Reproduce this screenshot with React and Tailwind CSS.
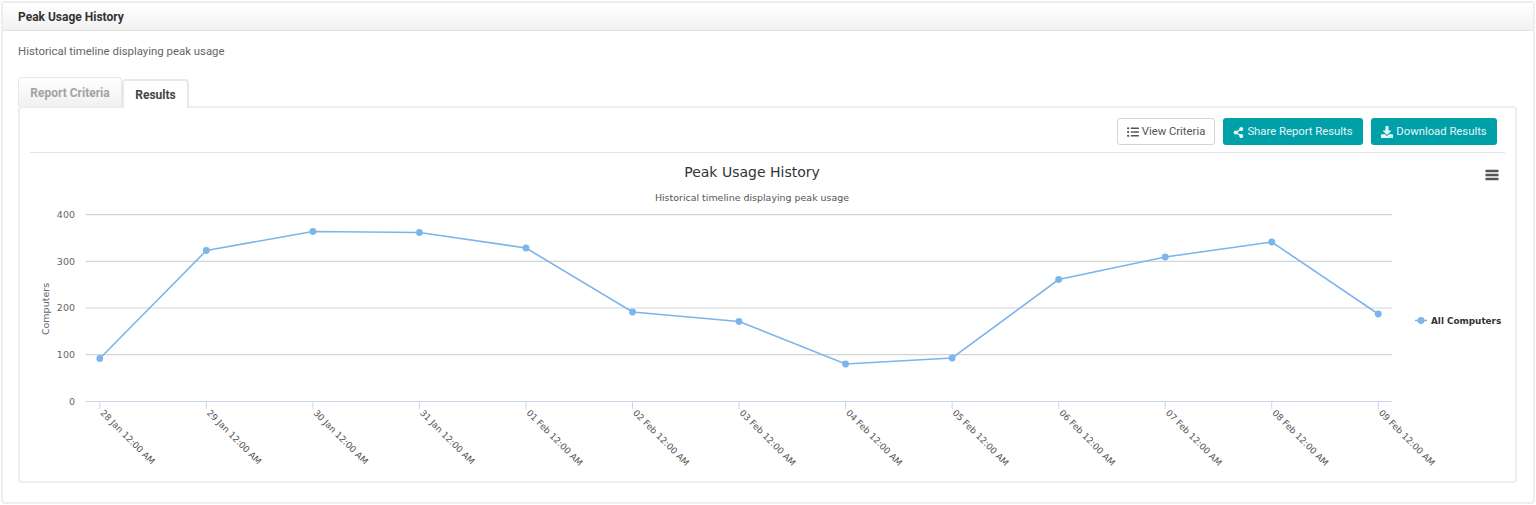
import { FaListUl, FaShareAlt, FaDownload } from 'react-icons/fa';

const pts = [358.5, 250.5, 231.5, 232.5, 248, 312, 321.5, 364, 358, 279.5, 257, 242, 314];
const dates = ['28 Jan', '29 Jan', '30 Jan', '31 Jan', '01 Feb', '02 Feb', '03 Feb', '04 Feb', '05 Feb', '06 Feb', '07 Feb', '08 Feb', '09 Feb'];
const xAt = i => 99.8 + i * 106.54;
const chartFont = '"DejaVu Sans", sans-serif';

function Chart() {
  return (
    <svg viewBox="30 153 1475 327" className="block w-full h-[327px]" style={{ fontFamily: chartFont }}>
      <text x="752" y="177" textAnchor="middle" fontSize="14" fill="#333">Peak Usage History</text>
      <text x="752" y="200.5" textAnchor="middle" fontSize="9.45" fill="#555">Historical timeline displaying peak usage</text>
      <path d="M1485.5 171h13M1485.5 175h13M1485.5 179h13" stroke="#555" strokeWidth="2.4" />

      {[400, 300, 200, 100].map(v => {
        const y = 401.3 - v * 0.4665;
        return <line key={v} x1="86" x2="1392" y1={y} y2={y} stroke="#d4d4d4" strokeWidth="1.2" />;
      })}
      <line x1="86" x2="1392" y1="401.5" y2="401.5" stroke="#ccd6eb" strokeWidth="1.2" />
      {[400, 300, 200, 100, 0].map(v => (
        <text key={v} x="75" y={404.5 - v * 0.4665} textAnchor="end" fontSize="9.5" fill="#666">{v}</text>
      ))}
      <text transform="translate(49 309) rotate(-90)" textAnchor="middle" fontSize="9.5" fill="#666">Computers</text>

      {dates.map((d, i) => (
        <g key={d}>
          <line x1={xAt(i)} x2={xAt(i)} y1="402" y2="409" stroke="#ccd6eb" />
          <text transform={`translate(${xAt(i)} 413.5) rotate(45)`} fontSize="8.9" fill="#555">{d} 12:00 AM</text>
        </g>
      ))}

      <polyline points={pts.map((y, i) => `${xAt(i)},${y}`).join(' ')} fill="none" stroke="#7cb5ec" strokeWidth="1.6" />
      {pts.map((y, i) => <circle key={i} cx={xAt(i)} cy={y} r="3.4" fill="#7cb5ec" />)}

      <line x1="1415" x2="1427" y1="320.5" y2="320.5" stroke="#7cb5ec" strokeWidth="1.6" />
      <circle cx="1421" cy="320.5" r="3.4" fill="#7cb5ec" />
      <text x="1431" y="324" fontSize="8.85" fontWeight="700" fill="#333">All Computers</text>
    </svg>
  );
}

export default function App() {
  return (
    <div className="h-[505px] bg-white pt-px px-px font-['Roboto',sans-serif] text-[#555]">
      <div className="h-[503px] border-2 border-[#eeeeee] rounded-sm">
        <div className="h-[28px] flex items-center pl-[15px] border-b border-[#e2e2e2] bg-gradient-to-b from-white to-[#f2f2f2]">
          <h2 className="text-[12px] font-bold text-[#333]">Peak Usage History</h2>
        </div>

        <div className="pl-[15px]">
          <p className="mt-[11px] text-[11.4px] leading-[18px] text-[#666]">Historical timeline displaying peak usage</p>

          <div className="mt-[17px] flex items-end h-[29px] relative z-10">
            <div className="h-[29px] w-[104px] flex items-center justify-center border border-b-0 border-[#e8e8e8] rounded-t-sm bg-gradient-to-b from-white to-[#f1f1f1] text-[12px] font-bold text-[#a3a3a3] pt-px">Report Criteria</div>
            <div className="h-[29px] w-[67px] flex items-center justify-center border-2 border-b-0 border-[#e8e8e8] rounded-t-sm bg-white text-[12px] font-bold text-[#444] -mb-0.5 pb-0.5 pt-0.5">Results</div>
          </div>

          <div className="h-[377px] w-[1499px] border-2 border-[#eeeeee] rounded-sm px-[10px] pt-[10px]">
            <div className="flex justify-end gap-2 h-[35px] pr-2 border-b border-[#e2e2e2]">
              <button className="h-[27px] w-[98px] flex items-center justify-center gap-[3px] bg-white border border-[#d4d4d4] rounded-[3px] text-[11.3px] text-[#555] pt-px">
                <FaListUl size={12} /> View Criteria
              </button>
              <button className="h-[27px] w-[140px] flex items-center justify-center gap-[3px] bg-[#00a0a8] rounded-[3px] text-[11.3px] text-[#e6f6f6] pt-px">
                <FaShareAlt size={11} /> Share Report Results
              </button>
              <button className="h-[27px] w-[126px] flex items-center justify-center gap-[3px] bg-[#00a0a8] rounded-[3px] text-[11.3px] text-[#e6f6f6] pt-px">
                <FaDownload size={12} /> Download Results
              </button>
            </div>
            <Chart />
          </div>
        </div>
      </div>
    </div>
  );
}
